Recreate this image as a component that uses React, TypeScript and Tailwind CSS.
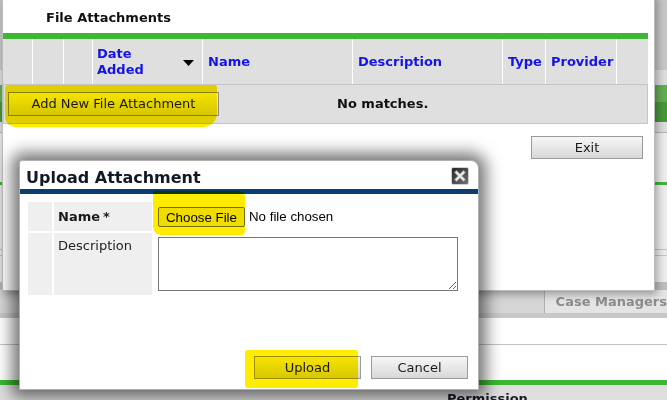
import React from 'react';

// yellow marker strokes drawn over the screenshot
function Marker({ className }: { className: string }) {
  return <div className={`pointer-events-none absolute bg-[#ffec00] mix-blend-multiply ${className}`} />;
}

function BackgroundPage() {
  return (
    <div className="flex h-full w-full flex-col bg-[#ececec]">
      <div className="h-[70px] shrink-0 bg-[#c6c6c6]" />
      <div className="h-[15px] shrink-0 bg-[#dcdcdc]" />
      <div className="h-[17px] shrink-0 bg-[#62ad50]" />
      <div className="h-[20px] shrink-0 bg-[#46973a]" />
      <div className="h-[11px] shrink-0 border-b border-[#b4b4b4] bg-[#dcdcdc]" />
      <div className="h-[49px] shrink-0" />
      <div className="h-[3px] shrink-0 bg-[#3cb832]" />
      <div className="h-[65px] shrink-0 border-b border-[#c4c4c4]" />
      <div className="h-[6px] shrink-0 border-b border-[#c4c4c4]" />
      <div className="h-[26px] shrink-0" />
      <div className="h-[8px] shrink-0 bg-[#bdbdbd]" />
      <div className="flex h-[23px] shrink-0 bg-[#e4e4e4]">
        <div className="w-[547px] bg-[#d6d6d6]" />
        <div className="flex items-center whitespace-nowrap border-l border-[#b0b0b0] pl-[11px] text-[13px] font-bold text-[#8c8c8c]">
          Case Managers
        </div>
      </div>
      <div className="h-[5px] shrink-0 bg-[#c8c8c8]" />
      <div className="h-[27px] shrink-0 border-b border-[#c4c4c4] bg-white" />
      <div className="h-[35px] shrink-0 bg-white" />
      <div className="h-[5px] shrink-0 bg-[#3cb832]" />
      <div className="min-h-0 flex-1 bg-[#dedede] pl-[447px] pt-[4px] text-[13px] font-bold text-[#1a1a2a]">Permission</div>
    </div>
  );
}

function HeadCell({ w, children, first }: { w: string; children?: React.ReactNode; first?: boolean }) {
  return (
    <div className={`flex h-full items-center pl-[5px] ${w} ${first ? '' : 'border-l border-white'}`}>{children}</div>
  );
}

function FileAttachmentsWindow() {
  const link = 'text-[13px] font-bold leading-[16px] text-[#1414e6]';
  return (
    <div className="absolute left-[2px] top-[-10px] h-[301px] w-[653px] rounded-t-[10px] border border-[#bdbdbd] bg-white shadow-[2px_3px_8px_rgba(0,0,0,0.35)]">
      <div className="h-[42px] pl-[43px] pt-[19px] text-[13px] font-bold leading-[16px] text-[#111]">File Attachments</div>
      <div className="w-[645px]">
        <div className="h-[6px] bg-[#3cb832]" />
        <div className="flex h-[45px] bg-[#dfdfdf]">
          <HeadCell w="w-[29px]" first />
          <HeadCell w="w-[31px]" />
          <HeadCell w="w-[29px]" />
          <div className="flex h-full w-[110px] items-center justify-between border-l border-white pl-[4px] pr-[8px]">
            <span className={`${link} pt-[1px]`}>
              Date
              <br />
              Added
            </span>
            <svg width="11" height="6" viewBox="0 0 11 6" className="mt-[2px]">
              <polygon points="0,0 11,0 5.5,6" fill="#000" />
            </svg>
          </div>
          <HeadCell w="w-[150px]">
            <span className={link}>Name</span>
          </HeadCell>
          <HeadCell w="w-[150px]">
            <span className={link}>Description</span>
          </HeadCell>
          <HeadCell w="w-[43px]">
            <span className={link}>Type</span>
          </HeadCell>
          <HeadCell w="w-[71px]">
            <span className={link}>Provider</span>
          </HeadCell>
          <HeadCell w="w-[32px]" />
        </div>
        <div className="flex h-[40px] items-center border border-[#c4c4c4] bg-[#dfdfdf]">
          <button className="ml-[4px] h-[24px] w-[211px] border border-[#8a8a8a] bg-linear-to-b from-[#f6f6f6] to-[#d6d6d6] text-[13px] text-[#1a1a1a]">
            Add New File Attachment
          </button>
          <span className="ml-[118px] text-[13px] font-bold text-[#111]">No matches.</span>
        </div>
        <div className="mt-[12px] flex justify-end pr-[5px]">
          <button className="h-[23px] w-[112px] border border-[#9a9a9a] bg-linear-to-b from-[#f7f7f7] to-[#d8d8d8] text-[13px] text-[#1a1a1a]">
            Exit
          </button>
        </div>
      </div>
      <Marker className="left-[2px] top-[94px] h-[42px] w-[212px] rounded-t-[3px] rounded-bl-[10px] rounded-br-[14px]" />
    </div>
  );
}

function CloseButton() {
  return (
    <div className="mt-[6px] flex h-[18px] w-[18px] items-center justify-center rounded-[2px] border border-[#cfcfcf] bg-linear-to-br from-[#262626] to-[#747474]">
      <svg width="12" height="12" viewBox="0 0 12 12">
        <path d="M2.5 2.5L9.5 9.5M9.5 2.5L2.5 9.5" stroke="#9a9a9a" strokeWidth="3.4" strokeLinecap="square" />
        <path d="M2.5 2.5L9.5 9.5M9.5 2.5L2.5 9.5" stroke="#ececec" strokeWidth="2" strokeLinecap="square" />
      </svg>
    </div>
  );
}

function UploadDialog() {
  const button = 'border border-[#9a9a9a] bg-linear-to-b from-[#f7f7f7] to-[#d8d8d8] text-[13px] text-[#1a1a1a]';
  return (
    <div className="absolute left-[19px] top-[160px] flex h-[230px] w-[460px] flex-col rounded-tl-[3px] rounded-tr-[8px] border border-[#b0b0b0] bg-white shadow-[0_0_16px_7px_rgba(0,0,0,0.55)]">
      <div className="flex h-[28px] items-start justify-between pl-[6px] pr-[9px]">
        <span className="pt-[7px] text-[16px] font-bold leading-[20px] text-[#111827]">Upload Attachment</span>
        <CloseButton />
      </div>
      <div className="h-[5px] bg-[#0b3d72]" />
      <div className="ml-[8px] mt-[8px] flex flex-col gap-[2px]">
        <div className="flex h-[29px] gap-[2px]">
          <div className="w-[24px] bg-[#efefef]" />
          <div className="flex w-[98px] items-center bg-[#efefef] pl-[4px] text-[13px] font-bold text-[#1a1a1a]">
            Name<span className="ml-[3px]">*</span>
          </div>
          <div className="flex items-center pl-[4px] font-['Liberation_Sans',Arial,sans-serif] text-[13.3px] text-black">
            <button className="h-[20px] w-[87px] rounded-[2px] border border-[#767676] bg-[#efefef]">Choose File</button>
            <span className="ml-[4px]">No file chosen</span>
          </div>
        </div>
        <div className="flex h-[62px] gap-[2px]">
          <div className="w-[24px] bg-[#efefef]" />
          <div className="w-[98px] bg-[#efefef] pl-[4px] pt-[3px] text-[13px] text-[#222]">Description</div>
          <div className="pl-[4px] pt-[4px]">
            <textarea className="block h-[54px] w-[300px] border border-[#767676] bg-white outline-none" />
          </div>
        </div>
      </div>
      <div className="mt-auto flex justify-end gap-[10px] pb-[10px] pr-[10px]">
        <button className={`h-[23px] w-[107px] ${button}`}>Upload</button>
        <button className={`h-[23px] w-[97px] ${button}`}>Cancel</button>
      </div>
      <Marker className="left-[133px] top-[30px] h-[44px] w-[92px] rounded-tl-[2px] rounded-tr-[6px] rounded-bl-[8px] rounded-br-[4px]" />
      <Marker className="left-[225px] top-[189px] h-[38px] w-[113px] rounded-[3px]" />
    </div>
  );
}

export default function App() {
  return (
    <div className="relative h-[400px] w-[667px] overflow-hidden font-['DejaVu_Sans',Verdana,sans-serif] text-[13px]">
      <BackgroundPage />
      <FileAttachmentsWindow />
      <UploadDialog />
    </div>
  );
}
